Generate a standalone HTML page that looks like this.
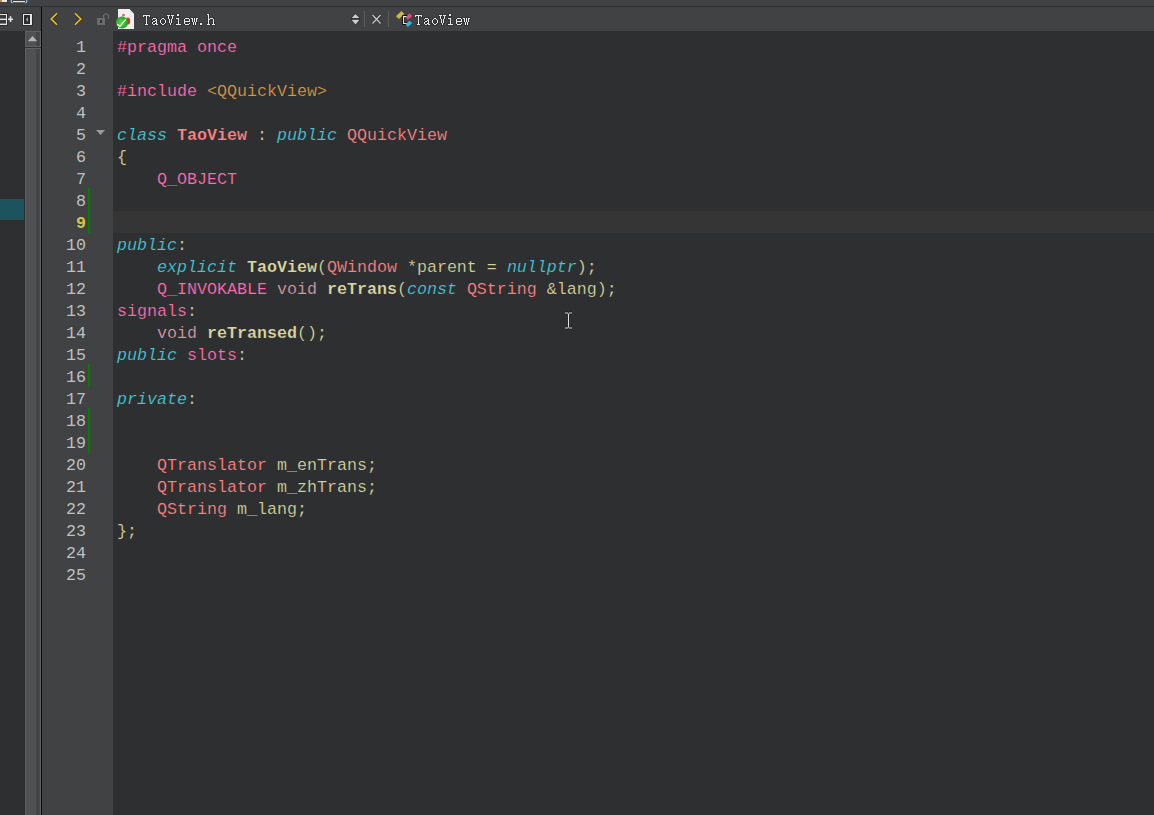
<!DOCTYPE html>
<html><head><meta charset="utf-8">
<style>
*{margin:0;padding:0;box-sizing:border-box}
html,body{width:1154px;height:815px;overflow:hidden;background:#2e2f30}
body{position:relative;font-family:"Liberation Mono",monospace}
.abs{position:absolute}
#topstrip{left:0;top:0;width:1154px;height:6px;background:#404244}
#topline{left:0;top:6px;width:1154px;height:1px;background:#313131}
#toolbar{left:0;top:7px;width:1154px;height:24px;background:#404244}
#leftpanel{left:0;top:31px;width:24px;height:784px;background:#2e2f30}
#lpedge{left:24px;top:31px;width:1px;height:784px;background:#2a2b2c}
#sel{left:0;top:199px;width:24px;height:21px;background:#1d535c}
#sep{left:41px;top:7px;width:1px;height:808px;background:#0b0c0d}
#gutter{left:42px;top:31px;width:71px;height:784px;background:#404244}
#code{left:113px;top:31px;width:1041px;height:784px;background:#2e2f30}
#curline{left:113px;top:211px;width:1041px;height:22px;background:#353535}
.sbb{position:absolute;left:25px;width:16px;border:1px solid #5f6062;background:linear-gradient(to right,#505153 0,#505153 9.5px,#434446 10.5px,#434446 12.5px,#48494b 13.5px)}
.gb{position:absolute;left:88px;width:2px;background:#008000}
.ln{position:absolute;left:42px;width:44px;text-align:right;font-size:16.67px;line-height:22px;color:#bec0c2}
.cl{position:absolute;left:117px;white-space:pre;font-size:16.67px;line-height:22px;color:#d6cf9a;-webkit-text-stroke:0.2px rgba(46,47,48,0.8)}
.tb{position:absolute;white-space:pre;font-family:"Liberation Mono",monospace;font-size:17px;line-height:17px;color:#e6e6e6;transform:scaleX(0.784);transform-origin:0 0;text-shadow:1px 1px 0 #1e1e1e}
.pp{color:#ff6aad}
.inc{color:#d69545}
.kw{color:#45c6d6;font-style:italic}
.cls{color:#ff8080;font-weight:bold}
.ty{color:#ff8080}
.mac{color:#ff6aad}
.vd{color:#d69aa7}
.fn{color:#dcd49c;font-weight:bold}
.id{color:#d6cf9a}
.ln.cur{color:#d6c540;font-weight:bold}
</style></head><body>
<div class="abs" id="topstrip"></div>
<div class="abs" id="topline"></div>
<div class="abs" id="toolbar"></div>
<!-- top strip remnants -->
<div class="abs" style="left:0;top:0;width:2px;height:1.5px;background:#d08a40"></div>
<div class="abs" style="left:2px;top:0;width:5px;height:1.5px;background:#e8e8e8"></div>
<svg class="abs" style="left:0;top:0" width="32" height="6" viewBox="0 0 32 6">
<path d="M11.5 0 Q10.5 2 12.5 3" stroke="#9fc0e0" stroke-width="1.2" fill="none"/>
<path d="M26.5 0 Q27.5 2 25.5 3" stroke="#9fc0e0" stroke-width="1.2" fill="none"/>
<rect x="13" y="0" width="12" height="0.9" fill="#2a2a2c"/><rect x="13" y="0.9" width="12" height="1.3" fill="#e6e6e6"/>
</svg>
<!-- left toolbar icons -->
<svg class="abs" style="left:0;top:7px" width="41" height="24" viewBox="0 0 41 24">
<rect x="-3" y="6" width="11" height="13" fill="#1e1e1e" opacity="0.6"/>
<rect x="-3" y="7" width="10" height="11" fill="#e6e6e6"/>
<rect x="-3" y="8" width="9" height="3.6" fill="#3a3a3a"/>
<rect x="-3" y="13" width="9" height="3.6" fill="#3a3a3a"/>
<rect x="8" y="11.5" width="5" height="1.5" fill="#e6e6e6"/>
<rect x="9.8" y="9.2" width="1.5" height="5.8" fill="#e6e6e6"/>
<rect x="22" y="6" width="11" height="13" fill="#1e1e1e" opacity="0.6"/>
<rect x="23" y="7" width="9" height="11" fill="#e6e6e6"/>
<rect x="24" y="8" width="6" height="9" fill="#2c2c2c"/>
<path d="M28 10 L26 12.5 L28 15 Z" fill="#a8a8b0"/>
</svg>
<!-- nav arrows -->
<svg class="abs" style="left:42px;top:7px" width="80" height="24" viewBox="0 0 80 24">
<path d="M15 6.2 L9.2 12 L15 17.8" stroke="#1c1c1e" stroke-opacity="0.45" stroke-width="3" fill="none"/>
<path d="M33 6.2 L38.8 12 L33 17.8" stroke="#1c1c1e" stroke-opacity="0.45" stroke-width="3" fill="none"/>
<path d="M15 6.2 L9.2 12 L15 17.8" stroke="#f2c415" stroke-width="1.6" fill="none"/>
<path d="M33 6.2 L38.8 12 L33 17.8" stroke="#f2c415" stroke-width="1.6" fill="none"/>
<rect x="55" y="11" width="8" height="7" fill="#6a6b6d"/>
<rect x="58" y="13" width="2" height="3" fill="#2e2f30"/>
<path d="M61.5 11 V8.5 A2.7 2.7 0 0 1 66.5 8.5 V12" stroke="#6a6b6d" stroke-width="1.3" fill="none"/>
</svg>
<!-- file icon -->
<svg class="abs" style="left:112px;top:7px" width="26" height="24" viewBox="0 0 26 24">
<defs><radialGradient id="gg" cx="0.45" cy="0.5" r="0.6"><stop offset="0" stop-color="#5cd84c"/><stop offset="1" stop-color="#1e9a1e"/></radialGradient></defs>
<path d="M6 2 H17.8 L22 6.2 V22 H6 Z" fill="#f0f0f2"/>
<path d="M17.8 2 L22 6.2" stroke="#2a2a2a" stroke-width="0.8"/>
<path d="M17.8 2.5 V6.2 H21.5" fill="#e2e2e4"/>
<circle cx="11.5" cy="8.2" r="1.4" fill="#e06a6a"/>
<ellipse cx="16" cy="14" rx="2.2" ry="3.6" fill="#d23a3a"/>
<circle cx="10" cy="15.5" r="6.1" fill="url(#gg)"/>
<path d="M5.3 17.3 L7.9 19.3 L13.8 12.3" stroke="#ffffff" stroke-width="1.3" fill="none"/>
</svg>
<svg width="0" height="0" style="position:absolute;left:0;top:0"><defs><filter id="halo" x="-10%" y="-30%" width="120%" height="160%"><feMorphology in="SourceAlpha" operator="dilate" radius="1" result="d"/><feFlood flood-color="#1a1a1a" flood-opacity="0.35"/><feComposite in2="d" operator="in" result="s"/><feMerge><feMergeNode in="s"/><feMergeNode in="SourceGraphic"/></feMerge></filter></defs></svg>
<svg class="abs" style="left:141px;top:12px" width="76" height="16" viewBox="0 0 76 16"><g fill="#e8e8e8" filter="url(#halo)" shape-rendering="crispEdges"><rect x="2" y="3" width="7" height="1"/><rect x="2" y="4" width="1" height="1"/><rect x="5" y="4" width="1" height="1"/><rect x="8" y="4" width="1" height="1"/><rect x="5" y="5" width="1" height="1"/><rect x="5" y="6" width="1" height="1"/><rect x="5" y="7" width="1" height="1"/><rect x="5" y="8" width="1" height="1"/><rect x="5" y="9" width="1" height="1"/><rect x="5" y="10" width="1" height="1"/><rect x="5" y="11" width="1" height="1"/><rect x="4" y="12" width="3" height="1"/><rect x="12" y="6" width="3" height="1"/><rect x="11" y="7" width="1" height="1"/><rect x="15" y="7" width="1" height="1"/><rect x="14" y="8" width="2" height="1"/><rect x="12" y="9" width="2" height="1"/><rect x="15" y="9" width="1" height="1"/><rect x="11" y="10" width="1" height="1"/><rect x="15" y="10" width="1" height="1"/><rect x="11" y="11" width="1" height="1"/><rect x="14" y="11" width="2" height="1"/><rect x="12" y="12" width="2" height="1"/><rect x="15" y="12" width="2" height="1"/><rect x="21" y="6" width="2" height="1"/><rect x="20" y="7" width="1" height="1"/><rect x="23" y="7" width="1" height="1"/><rect x="19" y="8" width="1" height="1"/><rect x="24" y="8" width="1" height="1"/><rect x="19" y="9" width="1" height="1"/><rect x="24" y="9" width="1" height="1"/><rect x="19" y="10" width="1" height="1"/><rect x="24" y="10" width="1" height="1"/><rect x="20" y="11" width="1" height="1"/><rect x="23" y="11" width="1" height="1"/><rect x="21" y="12" width="2" height="1"/><rect x="26" y="3" width="3" height="1"/><rect x="30" y="3" width="3" height="1"/><rect x="27" y="4" width="1" height="1"/><rect x="31" y="4" width="1" height="1"/><rect x="27" y="5" width="1" height="1"/><rect x="31" y="5" width="1" height="1"/><rect x="27" y="6" width="1" height="1"/><rect x="31" y="6" width="1" height="1"/><rect x="28" y="7" width="1" height="1"/><rect x="30" y="7" width="1" height="1"/><rect x="28" y="8" width="1" height="1"/><rect x="30" y="8" width="1" height="1"/><rect x="28" y="9" width="1" height="1"/><rect x="30" y="9" width="1" height="1"/><rect x="28" y="10" width="1" height="1"/><rect x="30" y="10" width="1" height="1"/><rect x="29" y="11" width="1" height="1"/><rect x="29" y="12" width="1" height="1"/><rect x="36" y="2" width="2" height="1"/><rect x="36" y="3" width="2" height="1"/><rect x="35" y="6" width="3" height="1"/><rect x="37" y="7" width="1" height="1"/><rect x="37" y="8" width="1" height="1"/><rect x="37" y="9" width="1" height="1"/><rect x="37" y="10" width="1" height="1"/><rect x="37" y="11" width="1" height="1"/><rect x="35" y="12" width="5" height="1"/><rect x="44" y="6" width="4" height="1"/><rect x="43" y="7" width="1" height="1"/><rect x="48" y="7" width="1" height="1"/><rect x="43" y="8" width="1" height="1"/><rect x="48" y="8" width="1" height="1"/><rect x="43" y="9" width="6" height="1"/><rect x="43" y="10" width="1" height="1"/><rect x="43" y="11" width="1" height="1"/><rect x="48" y="11" width="1" height="1"/><rect x="44" y="12" width="4" height="1"/><rect x="50" y="6" width="2" height="1"/><rect x="53" y="6" width="1" height="1"/><rect x="55" y="6" width="2" height="1"/><rect x="51" y="7" width="1" height="1"/><rect x="53" y="7" width="1" height="1"/><rect x="55" y="7" width="1" height="1"/><rect x="51" y="8" width="1" height="1"/><rect x="53" y="8" width="1" height="1"/><rect x="55" y="8" width="1" height="1"/><rect x="51" y="9" width="1" height="1"/><rect x="53" y="9" width="1" height="1"/><rect x="55" y="9" width="1" height="1"/><rect x="52" y="10" width="1" height="1"/><rect x="54" y="10" width="1" height="1"/><rect x="52" y="11" width="1" height="1"/><rect x="54" y="11" width="1" height="1"/><rect x="52" y="12" width="1" height="1"/><rect x="54" y="12" width="1" height="1"/><rect x="59" y="11" width="2" height="1"/><rect x="59" y="12" width="2" height="1"/><rect x="66" y="2" width="2" height="1"/><rect x="67" y="3" width="1" height="1"/><rect x="67" y="4" width="1" height="1"/><rect x="67" y="5" width="1" height="1"/><rect x="67" y="6" width="1" height="1"/><rect x="69" y="6" width="3" height="1"/><rect x="67" y="7" width="2" height="1"/><rect x="72" y="7" width="1" height="1"/><rect x="67" y="8" width="1" height="1"/><rect x="72" y="8" width="1" height="1"/><rect x="67" y="9" width="1" height="1"/><rect x="72" y="9" width="1" height="1"/><rect x="67" y="10" width="1" height="1"/><rect x="72" y="10" width="1" height="1"/><rect x="67" y="11" width="1" height="1"/><rect x="72" y="11" width="1" height="1"/><rect x="66" y="12" width="3" height="1"/><rect x="71" y="12" width="3" height="1"/></g></svg>
<!-- combo arrows -->
<svg class="abs" style="left:345px;top:7px" width="50" height="24" viewBox="0 0 50 24">
<path d="M10.5 6 L15.5 11.3 H5.5 Z M5.5 13.3 H15.5 L10.5 18.5 Z" fill="#1e1e20" opacity="0.5"/>
<path d="M10.5 7 L14.5 11.3 H6.5 Z" fill="#cdcdcd"/>
<rect x="6" y="11.3" width="9" height="1.5" fill="#1e1e20"/>
<path d="M6.5 12.8 H14.5 L10.5 17.5 Z" fill="#cdcdcd"/>
<rect x="19" y="4" width="1" height="16" fill="#5c5d5f"/>
<path d="M27.5 8 L35.5 16.5 M35.5 8 L27.5 16.5" stroke="#1e1e20" stroke-opacity="0.45" stroke-width="2.6"/>
<path d="M27.5 8 L35.5 16.5 M35.5 8 L27.5 16.5" stroke="#d0d0d0" stroke-width="1.1"/>
<rect x="43" y="4" width="1" height="16" fill="#58595b"/>
</svg>
<!-- class icon -->
<svg class="abs" style="left:394px;top:7px" width="20" height="24" viewBox="0 0 20 24">
<path d="M7.4 4 L10.3 6.9 L5 11.9 L2 9.2 Z" fill="#cbb943"/>
<path d="M13 9.5 H9.6 V16.6 H13" stroke="#0c0c0c" stroke-width="2.8" fill="none"/>
<path d="M13 9.6 H9.6 V16.5 H13" stroke="#e8e8e8" stroke-width="1.1" fill="none"/>
<path d="M15.6 6.3 L18.1 8.9 L13.7 12.7 L11.9 10.1 Z" fill="#e24a7c"/>
<path d="M15.6 13.7 L18.1 16.2 L13.7 19.9 L11.7 17.1 Z" fill="#34b6e2"/>
</svg>
<svg class="abs" style="left:413px;top:12px" width="60" height="16" viewBox="0 0 60 16"><g fill="#e8e8e8" filter="url(#halo)" shape-rendering="crispEdges"><rect x="2" y="3" width="7" height="1"/><rect x="2" y="4" width="1" height="1"/><rect x="5" y="4" width="1" height="1"/><rect x="8" y="4" width="1" height="1"/><rect x="5" y="5" width="1" height="1"/><rect x="5" y="6" width="1" height="1"/><rect x="5" y="7" width="1" height="1"/><rect x="5" y="8" width="1" height="1"/><rect x="5" y="9" width="1" height="1"/><rect x="5" y="10" width="1" height="1"/><rect x="5" y="11" width="1" height="1"/><rect x="4" y="12" width="3" height="1"/><rect x="12" y="6" width="3" height="1"/><rect x="11" y="7" width="1" height="1"/><rect x="15" y="7" width="1" height="1"/><rect x="14" y="8" width="2" height="1"/><rect x="12" y="9" width="2" height="1"/><rect x="15" y="9" width="1" height="1"/><rect x="11" y="10" width="1" height="1"/><rect x="15" y="10" width="1" height="1"/><rect x="11" y="11" width="1" height="1"/><rect x="14" y="11" width="2" height="1"/><rect x="12" y="12" width="2" height="1"/><rect x="15" y="12" width="2" height="1"/><rect x="21" y="6" width="2" height="1"/><rect x="20" y="7" width="1" height="1"/><rect x="23" y="7" width="1" height="1"/><rect x="19" y="8" width="1" height="1"/><rect x="24" y="8" width="1" height="1"/><rect x="19" y="9" width="1" height="1"/><rect x="24" y="9" width="1" height="1"/><rect x="19" y="10" width="1" height="1"/><rect x="24" y="10" width="1" height="1"/><rect x="20" y="11" width="1" height="1"/><rect x="23" y="11" width="1" height="1"/><rect x="21" y="12" width="2" height="1"/><rect x="26" y="3" width="3" height="1"/><rect x="30" y="3" width="3" height="1"/><rect x="27" y="4" width="1" height="1"/><rect x="31" y="4" width="1" height="1"/><rect x="27" y="5" width="1" height="1"/><rect x="31" y="5" width="1" height="1"/><rect x="27" y="6" width="1" height="1"/><rect x="31" y="6" width="1" height="1"/><rect x="28" y="7" width="1" height="1"/><rect x="30" y="7" width="1" height="1"/><rect x="28" y="8" width="1" height="1"/><rect x="30" y="8" width="1" height="1"/><rect x="28" y="9" width="1" height="1"/><rect x="30" y="9" width="1" height="1"/><rect x="28" y="10" width="1" height="1"/><rect x="30" y="10" width="1" height="1"/><rect x="29" y="11" width="1" height="1"/><rect x="29" y="12" width="1" height="1"/><rect x="36" y="2" width="2" height="1"/><rect x="36" y="3" width="2" height="1"/><rect x="35" y="6" width="3" height="1"/><rect x="37" y="7" width="1" height="1"/><rect x="37" y="8" width="1" height="1"/><rect x="37" y="9" width="1" height="1"/><rect x="37" y="10" width="1" height="1"/><rect x="37" y="11" width="1" height="1"/><rect x="35" y="12" width="5" height="1"/><rect x="44" y="6" width="4" height="1"/><rect x="43" y="7" width="1" height="1"/><rect x="48" y="7" width="1" height="1"/><rect x="43" y="8" width="1" height="1"/><rect x="48" y="8" width="1" height="1"/><rect x="43" y="9" width="6" height="1"/><rect x="43" y="10" width="1" height="1"/><rect x="43" y="11" width="1" height="1"/><rect x="48" y="11" width="1" height="1"/><rect x="44" y="12" width="4" height="1"/><rect x="50" y="6" width="2" height="1"/><rect x="53" y="6" width="1" height="1"/><rect x="55" y="6" width="2" height="1"/><rect x="51" y="7" width="1" height="1"/><rect x="53" y="7" width="1" height="1"/><rect x="55" y="7" width="1" height="1"/><rect x="51" y="8" width="1" height="1"/><rect x="53" y="8" width="1" height="1"/><rect x="55" y="8" width="1" height="1"/><rect x="51" y="9" width="1" height="1"/><rect x="53" y="9" width="1" height="1"/><rect x="55" y="9" width="1" height="1"/><rect x="52" y="10" width="1" height="1"/><rect x="54" y="10" width="1" height="1"/><rect x="52" y="11" width="1" height="1"/><rect x="54" y="11" width="1" height="1"/><rect x="52" y="12" width="1" height="1"/><rect x="54" y="12" width="1" height="1"/></g></svg>
<div class="abs" id="leftpanel"></div>
<div class="abs" id="lpedge"></div>
<div class="abs" id="sel"></div>
<div class="sbb" style="top:31px;height:16px"></div>
<svg class="abs" style="left:25px;top:31px" width="16" height="16" viewBox="0 0 16 16"><path d="M7.5 5 L12.2 10.3 H2.8 Z" fill="#b4b4b4"/></svg>
<div class="abs" style="left:25px;top:47px;width:16px;height:1px;background:#333436"></div>
<div class="sbb" style="top:48px;height:800px"></div>
<div class="abs" id="sep"></div>
<div class="abs" id="gutter"></div>
<div class="abs" id="code"></div>
<div class="abs" id="curline"></div>
<div class="gb" style="top:188px;height:45px"></div>
<div class="gb" style="top:364px;height:23px"></div>
<div class="gb" style="top:408px;height:45px"></div>
<svg class="abs" style="left:95px;top:129px" width="11" height="7" viewBox="0 0 11 7"><path d="M1 1 H10 L5.5 6 Z" fill="#9a9a9a"/></svg>
<!--LINES-->
<div class="ln" style="top:37px">1</div>
<div class="ln" style="top:59px">2</div>
<div class="ln" style="top:81px">3</div>
<div class="ln" style="top:103px">4</div>
<div class="ln" style="top:125px">5</div>
<div class="ln" style="top:147px">6</div>
<div class="ln" style="top:169px">7</div>
<div class="ln" style="top:191px">8</div>
<div class="ln cur" style="top:213px">9</div>
<div class="ln" style="top:235px">10</div>
<div class="ln" style="top:257px">11</div>
<div class="ln" style="top:279px">12</div>
<div class="ln" style="top:301px">13</div>
<div class="ln" style="top:323px">14</div>
<div class="ln" style="top:345px">15</div>
<div class="ln" style="top:367px">16</div>
<div class="ln" style="top:389px">17</div>
<div class="ln" style="top:411px">18</div>
<div class="ln" style="top:433px">19</div>
<div class="ln" style="top:455px">20</div>
<div class="ln" style="top:477px">21</div>
<div class="ln" style="top:499px">22</div>
<div class="ln" style="top:521px">23</div>
<div class="ln" style="top:543px">24</div>
<div class="ln" style="top:565px">25</div>
<div class="cl" style="top:37px"><span class="pp">#pragma once</span></div>
<div class="cl" style="top:81px"><span class="pp">#include</span> <span class="inc">&lt;QQuickView&gt;</span></div>
<div class="cl" style="top:125px"><span class="kw">class</span> <span class="cls">TaoView</span> : <span class="kw">public</span> <span class="ty">QQuickView</span></div>
<div class="cl" style="top:147px">{</div>
<div class="cl" style="top:169px">    <span class="mac">Q_OBJECT</span></div>
<div class="cl" style="top:235px"><span class="kw">public</span>:</div>
<div class="cl" style="top:257px">    <span class="kw">explicit</span> <span class="fn">TaoView</span>(<span class="ty">QWindow</span> <span class="id">*</span><span class="id">parent</span> = <span class="kw">nullptr</span>);</div>
<div class="cl" style="top:279px">    <span class="mac">Q_INVOKABLE</span> <span class="vd">void</span> <span class="fn">reTrans</span>(<span class="kw">const</span> <span class="ty">QString</span> <span class="id">&amp;lang</span>);</div>
<div class="cl" style="top:301px"><span class="mac">signals</span>:</div>
<div class="cl" style="top:323px">    <span class="vd">void</span> <span class="fn">reTransed</span>();</div>
<div class="cl" style="top:345px"><span class="kw">public</span> <span class="mac">slots</span>:</div>
<div class="cl" style="top:389px"><span class="kw">private</span>:</div>
<div class="cl" style="top:455px">    <span class="ty">QTranslator</span> <span class="id">m_enTrans</span>;</div>
<div class="cl" style="top:477px">    <span class="ty">QTranslator</span> <span class="id">m_zhTrans</span>;</div>
<div class="cl" style="top:499px">    <span class="ty">QString</span> <span class="id">m_lang</span>;</div>
<div class="cl" style="top:521px">};</div>
<!--/LINES-->
<svg class="abs" style="left:562px;top:309px" width="14" height="22" viewBox="0 0 14 22">
<path d="M3 4 H6 M7 4 H10 M6.5 4.5 V18 M3 19 H6 M7 19 H10" stroke="#1a1a1a" stroke-width="3" fill="none"/>
<path d="M3 4 H6 M7 4 H10 M6.5 4.5 V18.5 M3 19 H6 M7 19 H10" stroke="#e0e0e0" stroke-width="1.2" fill="none"/>
</svg>
</body></html>
